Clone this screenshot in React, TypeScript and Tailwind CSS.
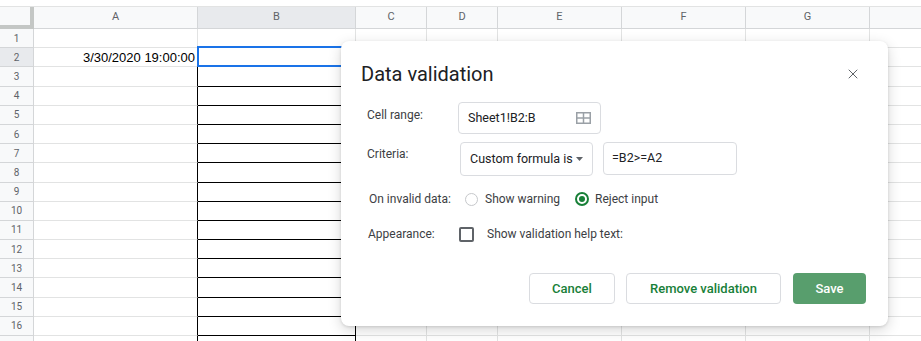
import { X } from "lucide-react";

const colWidths = [
  "w-[34px]",
  "w-[164px]",
  "w-[158px]",
  "w-[71px]",
  "w-[71px]",
  "w-[124px]",
  "w-[124px]",
  "w-[124px]",
  "w-[80px]",
];
const letters = ["A", "B", "C", "D", "E", "F", "G", ""];
const rows = Array.from({ length: 17 }, (_, i) => i + 1);

const GridIcon = () => (
  <svg width="15" height="12" viewBox="0 0 15 12" className="shrink-0">
    <rect x="0.75" y="0.75" width="13.5" height="10.5" fill="none" stroke="#9aa0a6" strokeWidth="1.5" />
    <line x1="7.5" y1="1" x2="7.5" y2="11" stroke="#9aa0a6" strokeWidth="1.5" />
    <line x1="1" y1="6" x2="14" y2="6" stroke="#9aa0a6" strokeWidth="1.5" />
  </svg>
);

const Sheet = () => (
  <div className="flex flex-col">
    <div className="h-[6px] bg-white" />
    <div className="flex h-[23px] border-t border-[#e2e3e3] bg-[#f8f9fa]">
      <div className={`${colWidths[0]} shrink-0 border-r-4 border-b-4 border-[#c4c7c5]`} />
      {letters.map((l, i) => (
        <div
          key={i}
          className={`${colWidths[i + 1]} shrink-0 flex items-center justify-center border-r border-b border-[#d4d6d8] text-[11px] text-[#5f6368] ${
            l === "B" ? "bg-[#e8eaed]" : ""
          }`}
        >
          {l}
        </div>
      ))}
    </div>
    {rows.map((r) => (
      <div key={r} className="flex h-[19.2px]">
        <div
          className={`${colWidths[0]} shrink-0 flex items-center justify-center border-r border-b border-[#d4d6d8] text-[10px] text-[#5f6368] ${
            r === 2 ? "bg-[#e8eaed]" : "bg-[#f8f9fa]"
          }`}
        >
          {r < 17 ? r : ""}
        </div>
        <div
          className={`${colWidths[1]} shrink-0 flex items-center justify-end pr-[2px] border-b border-[#e2e3e3] border-r ${
            r >= 3 ? "border-r-black" : ""
          } font-['Liberation_Sans',sans-serif] text-[13px] text-black`}
        >
          {r === 2 ? "3/30/2020 19:00:00" : ""}
        </div>
        <div
          className={`${colWidths[2]} shrink-0 relative border-r border-b ${
            r >= 2 ? "border-black" : "border-[#e2e3e3]"
          }`}
        >
          {r === 2 && (
            <div className="absolute left-[-1px] top-[-2px] right-[-1px] bottom-[-1px] border-2 border-[#1a73e8]" />
          )}
        </div>
        {colWidths.slice(3).map((w, i) => (
          <div key={i} className={`${w} shrink-0 border-r border-b border-[#e2e3e3]`} />
        ))}
      </div>
    ))}
  </div>
);

const Dialog = () => (
  <div className="absolute left-[341px] top-[41px] w-[547px] h-[285px] rounded-[8px] bg-white shadow-[0_4px_14px_rgba(0,0,0,0.16),0_1px_3px_rgba(0,0,0,0.12)] pt-[19px]">
    <div className="flex h-[28px] items-center justify-between pl-[20px] pr-[27px]">
      <span className="text-[20px] leading-[28px] text-[#202124]">Data validation</span>
      <X className="h-[16px] w-[16px] text-[#5f6368]" strokeWidth={1.5} />
    </div>

    <div className="mt-[14px] flex items-start pl-[26px]">
      <div className="w-[91px] shrink-0 pt-[5px] text-[12px] leading-[16px] text-[#3c4043]">Cell range:</div>
      <div className="flex h-[32px] w-[143px] items-center justify-between rounded-[4px] border border-[#dadce0] pl-[9px] pr-[9px] text-[12.5px] text-[#202124]">
        <span>Sheet1!B2:B</span>
        <GridIcon />
      </div>
    </div>

    <div className="mt-[8px] flex items-start pl-[26px]">
      <div className="w-[91px] shrink-0 pt-[4px] text-[12px] leading-[16px] text-[#3c4043]">Criteria:</div>
      <div className="ml-[2px] flex h-[34px] w-[133px] items-center justify-between rounded-[4px] border border-[#dadce0] pl-[9px] pr-[9px] text-[12.5px] text-[#202124]">
        <span>Custom formula is</span>
        <svg width="7" height="4" viewBox="0 0 7 4">
          <path d="M0 0 L7 0 L3.5 4 Z" fill="#5f6368" />
        </svg>
      </div>
      <div className="ml-[10px] flex h-[33px] w-[134px] items-center rounded-[4px] border border-[#dadce0] pl-[8px] text-[12.5px] text-[#202124]">
        =B2&gt;=A2
      </div>
    </div>

    <div className="mt-[15px] flex h-[16px] items-center pl-[28px] text-[12px] text-[#3c4043]">
      <div className="w-[96px] shrink-0">On invalid data:</div>
      <div className="h-[13px] w-[13px] shrink-0 rounded-full border border-[#c6c8cb]" />
      <span className="ml-[7px]">Show warning</span>
      <div className="ml-[15px] flex h-[14px] w-[14px] shrink-0 items-center justify-center rounded-full border-2 border-[#188038]">
        <div className="h-[6px] w-[6px] rounded-full bg-[#188038]" />
      </div>
      <span className="ml-[6px]">Reject input</span>
    </div>

    <div className="mt-[19px] flex h-[16px] items-center pl-[27px] text-[12px] text-[#3c4043]">
      <div className="w-[91px] shrink-0">Appearance:</div>
      <div className="h-[15px] w-[15px] shrink-0 rounded-[2px] border-2 border-[#5f6368]" />
      <span className="ml-[13px]">Show validation help text:</span>
    </div>

    <div className="mt-[31px] flex justify-end gap-[11px] pr-[22px] text-[13px] font-medium">
      <button className="h-[31px] w-[86px] rounded-[4px] border border-[#dadce0] bg-white text-[#188038]">Cancel</button>
      <button className="h-[31px] w-[155px] rounded-[4px] border border-[#dadce0] bg-white text-[#188038]">
        Remove validation
      </button>
      <button className="ml-[1px] h-[31px] w-[73px] rounded-[4px] bg-[#589e6d] text-white">Save</button>
    </div>
  </div>
);

export default function App() {
  return (
    <div className="relative h-[341px] w-[921px] overflow-hidden bg-white font-['Roboto',sans-serif]">
      <Sheet />
      <Dialog />
    </div>
  );
}
